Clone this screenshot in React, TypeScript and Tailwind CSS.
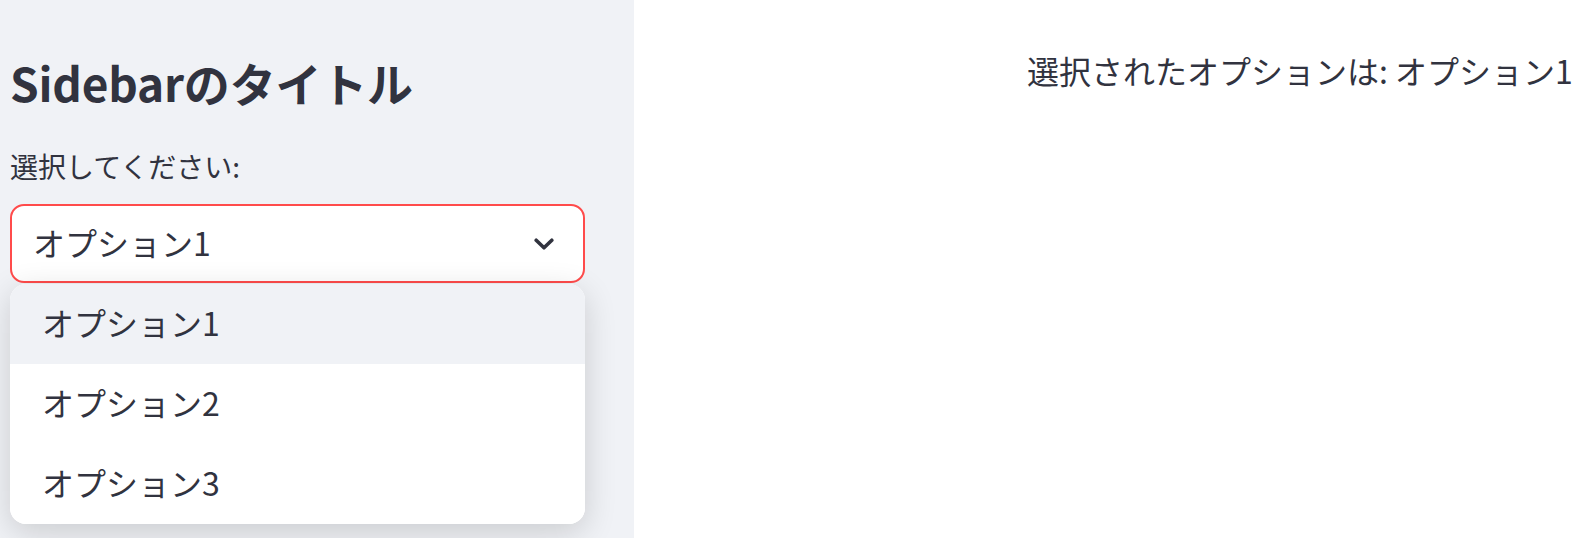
import React from 'react';

const font = { fontFamily: '"Noto Sans CJK JP", "Noto Sans", sans-serif' };

export default function App() {
  const options = ['オプション1', 'オプション2', 'オプション3'];
  const selected = options[0];

  return (
    <div className="flex w-[1586px] h-[538px] overflow-hidden bg-white text-[#31333f]" style={font}>
      {/* Sidebar */}
      <aside className="w-[634px] shrink-0 h-full bg-[#f0f2f6] pl-[10px] pr-[49px] pt-[55px]">
        <h1 className="text-[46px] font-bold leading-[1.2] tracking-[-0.2px] whitespace-nowrap">Sidebarのタイトル</h1>
        <label className="block mt-[37px] text-[28px] leading-[1.4]">選択してください:</label>

        <div className="relative mt-[18px]">
          <div className="h-[79px] flex items-center justify-between rounded-[14px] border-2 border-[#ff4b4b] bg-white pl-[21px] pr-[29px]">
            <span className="text-[32px] leading-none pb-[4px]">{selected}</span>
            <svg width="20" height="12" viewBox="0 0 20 12" fill="none">
              <path d="M2.2 2.2 L10 9.8 L17.8 2.2" stroke="#31333f" strokeWidth="3.6" strokeLinecap="round" strokeLinejoin="round" />
            </svg>
          </div>

          {/* Open menu */}
          <ul className="absolute left-0 right-0 top-[80px] z-10 overflow-hidden rounded-[16px] bg-white shadow-[0_8px_32px_rgba(0,0,0,0.16)]">
            {options.map((opt) => (
              <li
                key={opt}
                className={
                  'h-[80px] flex items-center pl-[32px] pb-[5px] text-[32px] leading-none ' +
                  (opt === selected ? 'bg-[#f0f2f6]' : 'bg-white')
                }
              >
                {opt}
              </li>
            ))}
          </ul>
        </div>
      </aside>

      {/* Main */}
      <main className="flex-1 pl-[393px] pt-[45px]">
        <p className="text-[32px] leading-[1.6] whitespace-nowrap">選択されたオプションは: {selected}</p>
      </main>
    </div>
  );
}
